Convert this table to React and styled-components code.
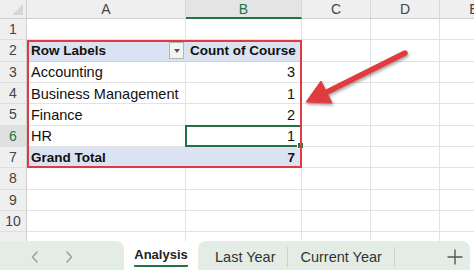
import React from "react";
import styled, { createGlobalStyle, css } from "styled-components";

const GREEN = "#217346";
const RED = "#e23b3f";
const PIVOT_BLUE = "#dbe3f2";

const Global = createGlobalStyle`
  html, body { margin: 0; padding: 0; background: #fff; }
  body { font-family: "Liberation Sans", Arial, sans-serif; }
`;

const Sheet = styled.div`
  width: 474px;
  height: 270px;
  display: flex;
  flex-direction: column;
  overflow: hidden;
  background: #fff;
`;

const Grid = styled.div`
  position: relative;
  flex: 1;
  display: grid;
  grid-template-columns: 27px 159px 116px 69px 69px 69px;
  grid-template-rows: 19px repeat(11, 21.33px);
  overflow: hidden;
`;

const Corner = styled.div`
  position: relative;
  background: #efefef;
  border-right: 1px solid #cfcfcf;
  border-bottom: 1px solid #cfcfcf;
  box-sizing: border-box;
  &::after {
    content: "";
    position: absolute;
    right: 3px;
    bottom: 3px;
    border-left: 11px solid transparent;
    border-bottom: 11px solid #d6d6d6;
  }
`;

const ColHead = styled.div`
  display: flex;
  align-items: center;
  justify-content: center;
  box-sizing: border-box;
  font-size: 14px;
  color: #444;
  background: #efefef;
  border-right: 1px solid #d8d8d8;
  border-bottom: 1px solid #cfcfcf;
  ${(p) =>
    p.$active &&
    css`
      background: #e4e4e4;
      color: ${GREEN};
      border-bottom: 2px solid ${GREEN};
    `}
`;

const RowHead = styled.div`
  display: flex;
  align-items: center;
  justify-content: center;
  box-sizing: border-box;
  font-size: 14px;
  color: #444;
  background: #efefef;
  border-right: 1px solid #cfcfcf;
  border-bottom: 1px solid #dedede;
  ${(p) =>
    p.$active &&
    css`
      background: #e0e0e0;
      color: ${GREEN};
    `}
`;

const Cell = styled.div`
  position: relative;
  display: flex;
  align-items: center;
  justify-content: ${(p) => (p.$num ? "flex-end" : "flex-start")};
  box-sizing: border-box;
  padding: 1px 6px 0 4px;
  font-size: 14.5px;
  color: #111;
  white-space: nowrap;
  border-right: 1px solid #e2e2e2;
  border-bottom: 1px solid #e2e2e2;
  ${(p) =>
    (p.$kind === "head" || p.$kind === "total") &&
    css`
      background: ${PIVOT_BLUE};
      font-weight: bold;
      font-size: 13.5px;
      border-right-color: ${PIVOT_BLUE};
    `}
  ${(p) =>
    p.$kind === "head" &&
    css`
      border-bottom-color: #c3d0e8;
    `}
`;

const FilterButton = styled.span`
  position: absolute;
  right: 1px;
  top: 2px;
  width: 15px;
  height: 17px;
  box-sizing: border-box;
  background: #f3f3f3;
  border: 1px solid #b4b4b4;
  display: flex;
  align-items: center;
  justify-content: center;
  &::after {
    content: "";
    border-left: 3.5px solid transparent;
    border-right: 3.5px solid transparent;
    border-top: 4px solid #555;
  }
`;

/* Overlays sit on grid areas without taking part in auto-placement */
const RangeBox = styled.div`
  position: absolute;
  inset: 0;
  grid-column: 2 / 4;
  grid-row: 3 / 9;
  border: 2px solid ${RED};
  z-index: 3;
  pointer-events: none;
`;

const ActiveCell = styled.div`
  position: absolute;
  inset: -1px 0 0 -1px;
  grid-column: 3 / 4;
  grid-row: 7 / 8;
  border: 2px solid ${GREEN};
  z-index: 2;
  pointer-events: none;
  &::after {
    content: "";
    position: absolute;
    right: -4px;
    bottom: -4px;
    width: 5px;
    height: 5px;
    background: ${GREEN};
    border: 1px solid #fff;
    z-index: 4;
  }
`;

const Callout = styled.svg`
  position: absolute;
  left: 0;
  top: 0;
  width: 474px;
  height: 241px;
  z-index: 5;
  pointer-events: none;
  filter: drop-shadow(1px 2px 1.5px rgba(0, 0, 0, 0.35));
`;

const TabBar = styled.div`
  height: 29px;
  flex: none;
  display: flex;
  align-items: stretch;
  background: #fff;
  font-size: 14.5px;
  color: #333;
`;

const NavBox = styled.div`
  width: 124px;
  background: #e3ede6;
  border-top-right-radius: 8px;
  display: flex;
  align-items: center;
  justify-content: center;
  gap: 26px;
  padding: 3px 20px 0 0;
  box-sizing: border-box;
`;

const ActiveTab = styled.div`
  width: 74px;
  display: flex;
  flex-direction: column;
  align-items: center;
  justify-content: center;
  padding-top: 3px;
  box-sizing: border-box;
  font-weight: bold;
  font-size: 13px;
  color: #222;
  span {
    padding-bottom: 3px;
    border-bottom: 2.5px solid ${GREEN};
    border-radius: 1px;
  }
`;

const TabStrip = styled.div`
  flex: 1;
  margin-right: 4px;
  background: #e3ede6;
  border-top-left-radius: 8px;
  border-top-right-radius: 8px;
  display: flex;
  align-items: center;
  padding: 3px 0 0 5px;
`;

const Tab = styled.div`
  padding: 0 12px;
  white-space: nowrap;
`;

const Divider = styled.div`
  width: 1px;
  height: 20px;
  background: #c9d3cc;
`;

const AddButton = styled.div`
  margin-left: auto;
  width: 30px;
  display: flex;
  justify-content: center;
  align-items: center;
`;

const Chevron = ({ dir }) => (
  <svg width="8" height="12" viewBox="0 0 8 12">
    <polyline
      points={dir === "left" ? "6,1 1.5,6 6,11" : "2,1 6.5,6 2,11"}
      fill="none"
      stroke="#9c9c9c"
      strokeWidth="1.4"
      strokeLinecap="round"
      strokeLinejoin="round"
    />
  </svg>
);

const PlusIcon = () => (
  <svg width="16" height="16" viewBox="0 0 16 16">
    <path d="M8 1v14M1 8h14" stroke="#555" strokeWidth="1.4" strokeLinecap="round" />
  </svg>
);

const columns = ["A", "B", "C", "D", "E"];

// the last row only peeks above the sheet tabs, so its number stays hidden
const rows = [
  { n: 1 },
  { n: 2, a: "Row Labels", b: "Count of Course", kind: "head" },
  { n: 3, a: "Accounting", b: 3 },
  { n: 4, a: "Business Management", b: 1 },
  { n: 5, a: "Finance", b: 2 },
  { n: 6, a: "HR", b: 1 },
  { n: 7, a: "Grand Total", b: 7, kind: "total" },
  { n: 8 },
  { n: 9 },
  { n: 10 },
  { n: 11, hideNumber: true },
];

export default function App() {
  return (
    <>
      <Global />
      <Sheet>
        <Grid>
          <Corner />
          {columns.map((c) => (
            <ColHead key={c} $active={c === "B"}>
              {c}
            </ColHead>
          ))}
          {rows.map((r) => (
            <React.Fragment key={r.n}>
              <RowHead $active={r.n === 6}>{r.hideNumber ? null : r.n}</RowHead>
              <Cell $kind={r.kind}>
                {r.a}
                {r.kind === "head" && <FilterButton />}
              </Cell>
              <Cell $kind={r.kind} $num={r.kind !== "head"}>
                {r.b}
              </Cell>
              <Cell />
              <Cell />
              <Cell />
            </React.Fragment>
          ))}
          <ActiveCell />
          <RangeBox />
          <Callout viewBox="0 0 474 241">
            <line x1="405" y1="53" x2="324" y2="93.5" stroke={RED} strokeWidth="5.5" strokeLinecap="round" />
            <polygon points="306,102 332,103 321,81" fill={RED} stroke={RED} strokeWidth="1" strokeLinejoin="round" />
          </Callout>
        </Grid>
        <TabBar>
          <NavBox>
            <Chevron dir="left" />
            <Chevron dir="right" />
          </NavBox>
          <ActiveTab>
            <span>Analysis</span>
          </ActiveTab>
          <TabStrip>
            <Tab>Last Year</Tab>
            <Divider />
            <Tab>Current Year</Tab>
            <Divider />
            <AddButton>
              <PlusIcon />
            </AddButton>
          </TabStrip>
        </TabBar>
      </Sheet>
    </>
  );
}
